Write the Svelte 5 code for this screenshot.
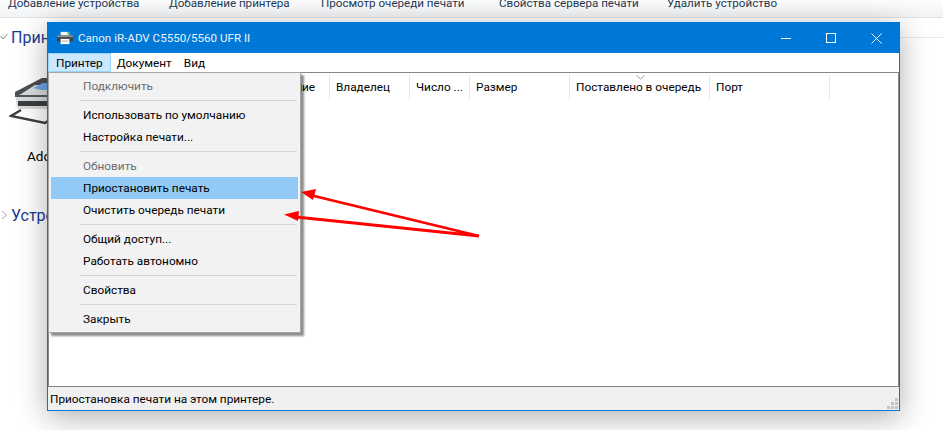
<script>
  const toolbar = [
    "Добавление устройства",
    "Добавление принтера",
    "Просмотр очереди печати",
    "Свойства сервера печати",
    "Удалить устройство",
  ];

  const columns = [
    "Имя документа",
    "Состояние",
    "Владелец",
    "Число ...",
    "Размер",
    "Поставлено в очередь",
    "Порт",
  ];

  const menuTop = ["Принтер", "Документ", "Вид"];

  // sep: разделитель, off: недоступный пункт, on: подсвеченный пункт
  const menu = [
    { label: "Подключить", off: true },
    { sep: true },
    { label: "Использовать по умолчанию" },
    { label: "Настройка печати..." },
    { sep: true },
    { label: "Обновить", off: true },
    { label: "Приостановить печать", on: true },
    { label: "Очистить очередь печати" },
    { sep: true },
    { label: "Общий доступ..." },
    { label: "Работать автономно" },
    { sep: true },
    { label: "Свойства" },
    { sep: true },
    { label: "Закрыть" },
  ];
</script>

<div class="page">
  <div class="toolbar">
    {#each toolbar as item}
      <span>{item}</span>
    {/each}
  </div>

  <section class="group">
    <div class="group-head">
      <svg width="8" height="8" viewBox="0 0 8 8"><path d="M0.5 3 L3 6 L7.5 1" fill="none" stroke="#8a8a8a" stroke-width="1" /></svg>
      <h3>Принтеры</h3>
      <i></i>
    </div>
    <div class="device">
      <svg width="46" height="52" viewBox="0 0 46 52">
        <path d="M6 19 L33 5 L46 5 L46 36 L8 36 Z" fill="#d8dadb" />
        <path d="M6 19 L33 5 L46 5 L46 12 L26 12 L12 21 L6 24 Z" fill="#4b4f52" />
        <path d="M24 15 L34 10 L46 10 L46 17 L32 17 Z" fill="#6fa4e8" />
        <path d="M6 22 L46 22 L46 24 L6 24 Z" fill="#55595c" />
        <path d="M9 28 L46 28 L46 33 L9 33 Z" fill="#3c3f42" />
        <path d="M12 37 L2 43 L36 50 L46 43 L46 37" fill="#fff" stroke="#3c3f42" stroke-width="2.4" />
      </svg>
      <span>Adobe PDF</span>
    </div>
  </section>

  <section class="group second">
    <div class="group-head">
      <svg width="8" height="10" viewBox="0 0 8 10"><path d="M2 1 L6.5 5 L2 9" fill="none" stroke="#a6a6a6" stroke-width="1" /></svg>
      <h3>Устройства</h3>
    </div>
  </section>

  <div class="window">
    <header class="title">
      <svg width="18" height="14" viewBox="0 0 20 16">
        <rect x="5" y="1" width="10" height="5" fill="#f4f4f4" />
        <rect x="13" y="1" width="2" height="3" fill="#3fae6a" />
        <rect x="1" y="5" width="18" height="7" fill="#3f4347" />
        <rect x="1" y="5" width="18" height="2" fill="#8c9196" />
        <rect x="5" y="9" width="10" height="6" fill="#fff" />
        <rect x="6" y="11" width="8" height="1" fill="#9aa0a6" />
      </svg>
      <span class="caption">Canon iR-ADV C5550/5560 UFR II</span>
      <div class="controls">
        <svg width="10" height="10" viewBox="0 0 10 10"><path d="M0 5.5 H10" stroke="#fff" /></svg>
        <svg width="10" height="10" viewBox="0 0 10 10"><rect x="0.5" y="0.5" width="9" height="9" fill="none" stroke="#fff" /></svg>
        <svg width="11" height="11" viewBox="0 0 11 11"><path d="M0.5 0.5 L10.5 10.5 M10.5 0.5 L0.5 10.5" stroke="#fff" /></svg>
      </div>
    </header>

    <nav class="menubar">
      {#each menuTop as item, i}
        <span class:open={i === 0}>{item}</span>
      {/each}
    </nav>

    <div class="list">
      <div class="columns">
        {#each columns as col}
          <div class="col">{col}</div>
        {/each}
        <div class="col"></div>
        <svg class="sort" width="9" height="5" viewBox="0 0 9 5"><path d="M0.5 0.5 L4.5 4 L8.5 0.5" fill="none" stroke="#9a9a9a" /></svg>
      </div>
    </div>

    <footer class="status">
      <span>Приостановка печати на этом принтере.</span>
      <svg class="grip" width="11" height="11" viewBox="0 0 11 11" fill="#c4c4c4">
        <rect x="8" y="0" width="3" height="3" />
        <rect x="4" y="4" width="3" height="3" />
        <rect x="8" y="4" width="3" height="3" />
        <rect x="0" y="8" width="3" height="3" />
        <rect x="4" y="8" width="3" height="3" />
        <rect x="8" y="8" width="3" height="3" />
      </svg>
    </footer>

    <div class="menu">
      {#each menu as item}
        {#if item.sep}
          <div class="sep"></div>
        {:else}
          <div class="item" class:off={item.off} class:on={item.on}>{item.label}</div>
        {/if}
      {/each}
    </div>
  </div>

  <svg class="arrows" width="943" height="430" viewBox="0 0 943 430">
    <path d="M479 236 L312 195.5 M479 236 L296 217" stroke="#fe0000" stroke-width="2.8" fill="none" />
    <path d="M301 192 L316 189 L313 200 Z" fill="#fe0000" />
    <path d="M284 214.500 L299 211 L298 221 Z" fill="#fe0000" />
  </svg>
</div>

<style>
  :global(body) {
    margin: 0;
    background: #fff;
  }

  .page {
    position: relative;
    width: 943px;
    height: 430px;
    overflow: hidden;
    background: #fff;
    font-family: Roboto, "Open Sans", sans-serif;
    font-size: 11.8px;
    color: #000;
  }

  .toolbar {
    display: grid;
    grid-template-columns: 161px 152px 178px 168px auto;
    align-items: start;
    height: 17px;
    padding-left: 8px;
    overflow: hidden;
    background: linear-gradient(#fdfdfe, #f1f3f5);
    border-bottom: 1px solid #e2e2e2;
    color: #1e3954;
    font-size: 11.6px;
    line-height: 16px;
  }

  .toolbar span {
    white-space: nowrap;
    margin-top: -5px;
  }

  .group-head {
    display: flex;
    align-items: center;
    gap: 3px;
    height: 36px;
    padding-top: 2px;
    box-sizing: border-box;
  }

  .group-head h3 {
    margin: 0;
    font-size: 16px;
    font-weight: 400;
    color: #1a3a94;
    white-space: nowrap;
  }

  .group-head i {
    flex: 1;
    height: 1px;
    background: #e4e8ee;
    margin-left: 8px;
  }

  .device {
    display: flex;
    flex-direction: column;
    align-items: flex-start;
    padding: 19px 0 0 9px;
    height: 110px;
    box-sizing: border-box;
  }

  .device svg {
    flex: none;
  }

  .device span {
    margin: 23px 0 0 18px;
    font-size: 13.5px;
    white-space: nowrap;
  }

  .second {
    margin-top: 32px;
  }

  .window {
    position: absolute;
    left: 47px;
    top: 22px;
    width: 853px;
    height: 389px;
    box-sizing: border-box;
    display: flex;
    flex-direction: column;
    background: #fff;
    border: 1px solid #0078d7;
    box-shadow: 0 6px 28px rgba(0, 0, 0, 0.32);
  }

  .title {
    display: flex;
    align-items: center;
    flex: none;
    height: 30px;
    padding-left: 8px;
    background: #0078d7;
    color: #fff;
  }

  .title svg {
    display: block;
  }

  .caption {
    margin-left: 4px;
    font-size: 11.6px;
    opacity: 0.92;
  }

  .controls {
    display: flex;
    align-items: center;
    gap: 35px;
    margin-left: auto;
    padding-right: 17px;
  }

  .menubar {
    display: flex;
    flex: none;
    height: 19px;
    line-height: 18px;
  }

  .menubar span {
    padding: 0 5px;
    box-sizing: border-box;
    border: 1px solid transparent;
  }

  .menubar .open {
    padding: 0 7px;
    background: #cce8ff;
    border-color: #99d1ff;
  }

  .list {
    flex: 1;
    border: 1px solid #828790;
    border-bottom-color: #7d8590;
  }

  .columns {
    position: relative;
    display: grid;
    grid-template-columns: 201px 80px 80px 60px 100px 140px 120px auto;
    height: 24px;
    margin-top: 2px;
  }

  .col {
    display: flex;
    align-items: center;
    padding-left: 6px;
    border-right: 1px solid #e5e5e5;
    overflow: hidden;
    white-space: nowrap;
  }

  .col:nth-child(8) {
    border-right: none;
  }

  .sort {
    position: absolute;
    left: 587px;
    top: 0;
  }

  .status {
    position: relative;
    flex: none;
    display: flex;
    align-items: center;
    height: 23px;
    padding: 1px 0 0 2px;
    box-sizing: border-box;
    background: #f0f0f0;
  }

  .grip {
    position: absolute;
    right: 1px;
    bottom: 1px;
  }

  .menu {
    position: absolute;
    left: 0;
    top: 49px;
    width: 253px;
    box-sizing: border-box;
    padding: 2px;
    background: #f2f2f2;
    border: 1px solid #a6a6a6;
    box-shadow: 3px 3px 2px rgba(0, 0, 0, 0.45);
  }

  .item {
    display: flex;
    align-items: center;
    height: 22px;
    padding-left: 32px;
  }

  .off {
    color: #6d6d6d;
  }

  .on {
    background: #91c9f7;
  }

  .sep {
    height: 1px;
    margin: 3px 1px 3px 29px;
    background: #d7d7d7;
  }

  .arrows {
    position: absolute;
    left: 0;
    top: 0;
    pointer-events: none;
  }
</style>
